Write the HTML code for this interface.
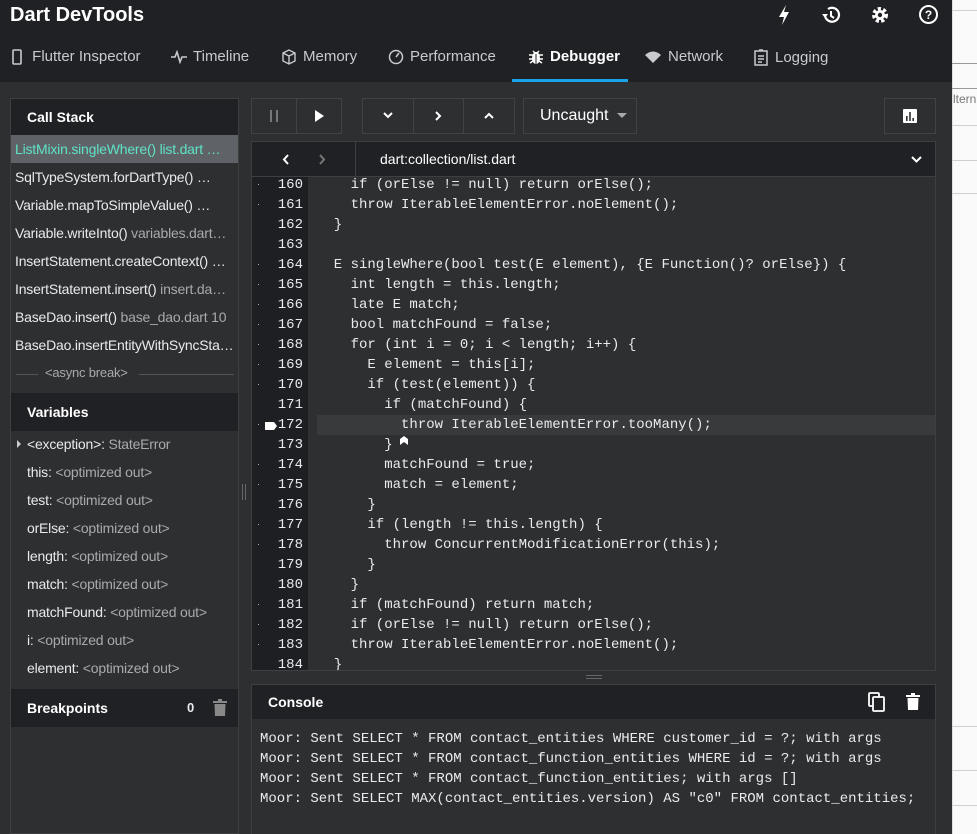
<!DOCTYPE html>
<html style="overflow:hidden;height:834px"><head><meta charset="utf-8"><style>
*{box-sizing:border-box;margin:0;padding:0}
body{width:977px;height:834px;overflow:hidden;background:#fff;font-family:"Liberation Sans",sans-serif;color:#e8eaed;position:relative}
.dark{position:absolute;left:0;top:0;width:952px;height:834px;background:#2e2f31}
.bar{position:absolute;left:0;top:0;width:952px;height:82px;background:#202124}
.abs{position:absolute}
.title{left:10px;top:4px;font-size:20px;font-weight:bold;color:#fff}
.tab{top:48px;font-size:15px;color:#c8cacd;display:flex;align-items:center;gap:6px}
.panel{border:1px solid #3e3f41;background:#2e2f31}
.hdr{background:#202124;font-size:14px;font-weight:bold;color:#fff;padding-left:16px;display:flex;align-items:center}
.row{position:absolute;left:4px;font-size:14px;color:#e8eaed;white-space:nowrap;letter-spacing:-0.2px}
.row span{color:#a8aaad}
.btn{position:absolute;border:1px solid #414245;background:#2e2f31;display:flex;align-items:center;justify-content:center;color:#fff;font-size:14px}
.mono{font-family:"Liberation Mono",monospace;font-size:14px}
.ln{position:absolute;left:0;width:56px;text-align:right;padding-right:5px;color:#e8eaed}
.cl{position:absolute;left:65px;white-space:pre;color:#e8eaed}
.dot{position:absolute;left:6px;width:1px;height:1px;background:#aaa}
.wl{position:absolute;left:952px;width:25px;height:1px;background:#d0d0d0}
</style></head><body>
<div class="dark"></div>
<div class="bar"></div>
<div class="abs title">Dart DevTools</div>
<svg class="abs" style="left:775px;top:4px" width="18" height="22" viewBox="0 0 18 22"><path d="M11 1 L4 13 H9 L7 21 L14 8 H9 Z" fill="#fff"/></svg>
<svg class="abs" style="left:820px;top:4px" width="22" height="22" viewBox="0 0 22 22"><path d="M5 11 A7 7 0 1 0 8 5" stroke="#fff" stroke-width="2.2" fill="none"/><path d="M2 10 L5 14 L8 10Z" fill="#fff"/><path d="M11 7 V12 L14 14" stroke="#fff" stroke-width="2" fill="none"/></svg>
<svg class="abs" style="left:870px;top:5px" width="20" height="20" viewBox="0 0 20 20"><circle cx="10" cy="10" r="6" fill="none" stroke="#fff" stroke-width="4" stroke-dasharray="3 2.2"/><circle cx="10" cy="10" r="5" fill="#fff"/><circle cx="10" cy="10" r="2.2" fill="#202124"/></svg>
<svg class="abs" style="left:918px;top:4px" width="21" height="21" viewBox="0 0 21 21"><circle cx="10.5" cy="10.5" r="8.5" fill="none" stroke="#fff" stroke-width="2"/><text x="10.5" y="15" text-anchor="middle" font-size="12" font-weight="bold" fill="#fff" font-family="Liberation Sans">?</text></svg>
<div class="abs tab" style="left:12px"><svg width="10" height="16"><rect x="1" y="1" width="8" height="14" rx="1" fill="none" stroke="#c8cacd" stroke-width="1.6"/></svg>&nbsp;Flutter Inspector</div>
<div class="abs tab" style="left:171px"><svg width="16" height="14"><path d="M0 7 H4 L6 2 L9 12 L11 7 H16" stroke="#c8cacd" stroke-width="1.6" fill="none"/></svg>Timeline</div>
<div class="abs tab" style="left:281px"><svg width="16" height="16"><path d="M2 4 L8 1 L14 4 V12 L8 15 L2 12Z M2 4 L8 7 L14 4 M8 7 V15" stroke="#c8cacd" stroke-width="1.4" fill="none"/></svg>Memory</div>
<div class="abs tab" style="left:388px"><svg width="16" height="16"><circle cx="8" cy="8" r="6.5" stroke="#c8cacd" stroke-width="1.5" fill="none"/><path d="M8 8 L11 4" stroke="#c8cacd" stroke-width="1.6"/></svg>Performance</div>
<div class="abs tab" style="left:528px;color:#fff;font-weight:bold"><svg width="16" height="16"><ellipse cx="8" cy="9" rx="4" ry="6" fill="#fff"/><path d="M1 6 H15 M1 10 H15 M2 14 L5 12 M14 14 L11 12 M5 2 L7 4 M11 2 L9 4" stroke="#fff" stroke-width="1.4"/><path d="M8 5 V15" stroke="#202124" stroke-width="1"/></svg>Debugger</div>
<div class="abs" style="left:512px;top:79px;width:116px;height:3px;background:#1aa3e8"></div>
<div class="abs tab" style="left:644px"><svg width="18" height="14"><path d="M1 5 Q9 -2 17 5 L9 13Z" fill="#c8cacd"/></svg>Network</div>
<div class="abs tab" style="left:753px"><svg width="16" height="18"><rect x="2" y="3" width="12" height="14" fill="none" stroke="#c8cacd" stroke-width="1.5"/><path d="M5 8 H11 M5 11 H11 M5 14 H9 M6 2 H10" stroke="#c8cacd" stroke-width="1.5"/></svg>Logging</div>

<div class="abs panel" style="left:10px;top:98px;width:229px;height:736px;overflow:hidden">
 <div class="hdr" style="height:36px">Call Stack</div>
 <div class="abs" style="left:0;top:36px;width:227px;height:28px;background:#5f6368"></div>
 <div class="row" style="top:42px;color:#5fe3c5">ListMixin.singleWhere() list.dart …</div>
 <div class="row" style="top:70px">SqlTypeSystem.forDartType() …</div>
 <div class="row" style="top:98px">Variable.mapToSimpleValue() …</div>
 <div class="row" style="top:126px">Variable.writeInto() <span>variables.dart…</span></div>
 <div class="row" style="top:154px">InsertStatement.createContext() …</div>
 <div class="row" style="top:182px">InsertStatement.insert() <span>insert.da…</span></div>
 <div class="row" style="top:210px">BaseDao.insert() <span>base_dao.dart 10</span></div>
 <div class="row" style="top:238px">BaseDao.insertEntityWithSyncSta…</div>
 <div class="abs" style="left:5px;top:275px;width:22px;height:1px;background:#555"></div>
 <div class="row" style="left:34px;top:266px;font-size:13px;color:#a8aaad">&lt;async break&gt;</div>
 <div class="abs" style="left:128px;top:275px;width:95px;height:1px;background:#555"></div>
 <div class="abs hdr" style="left:0;top:294px;width:227px;height:38px">Variables</div>
 <div class="abs" style="left:6px;top:341px;width:0;height:0;border-left:4px solid #ccc;border-top:4px solid transparent;border-bottom:4px solid transparent"></div>
 <div class="row" style="left:16px;top:337px">&lt;exception&gt;: <span>StateError</span></div>
 <div class="row" style="left:16px;top:365px">this: <span>&lt;optimized out&gt;</span></div>
 <div class="row" style="left:16px;top:393px">test: <span>&lt;optimized out&gt;</span></div>
 <div class="row" style="left:16px;top:421px">orElse: <span>&lt;optimized out&gt;</span></div>
 <div class="row" style="left:16px;top:449px">length: <span>&lt;optimized out&gt;</span></div>
 <div class="row" style="left:16px;top:477px">match: <span>&lt;optimized out&gt;</span></div>
 <div class="row" style="left:16px;top:505px">matchFound: <span>&lt;optimized out&gt;</span></div>
 <div class="row" style="left:16px;top:533px">i: <span>&lt;optimized out&gt;</span></div>
 <div class="row" style="left:16px;top:561px">element: <span>&lt;optimized out&gt;</span></div>
 <div class="abs hdr" style="left:0;top:590px;width:227px;height:38px">Breakpoints</div>
 <div class="row" style="left:176px;top:601px;font-weight:bold;font-size:13px">0</div>
 <svg class="abs" style="left:202px;top:600px" width="14" height="17"><rect x="0" y="2" width="14" height="2" fill="#888"/><rect x="5" y="0" width="4" height="2" fill="#888"/><path d="M1.5 5 H12.5 L12 17 H2Z" fill="#888"/></svg>
</div>
<div class="abs" style="left:242px;top:484px;width:1px;height:16px;background:#666"></div>
<div class="abs" style="left:245px;top:484px;width:1px;height:16px;background:#666"></div>

<div class="btn" style="left:251px;top:98px;width:46px;height:36px"><svg width="10" height="12"><rect x="1" width="2" height="12" fill="#777"/><rect x="7" width="2" height="12" fill="#777"/></svg></div>
<div class="btn" style="left:296px;top:98px;width:46px;height:36px"><svg width="10" height="12"><path d="M1 0 L10 6 L1 12Z" fill="#fff"/></svg></div>
<div class="btn" style="left:362px;top:98px;width:52px;height:36px"><svg width="10" height="8"><path d="M1 1 L5 5 L9 1" stroke="#fff" stroke-width="2" fill="none"/></svg></div>
<div class="btn" style="left:413px;top:98px;width:51px;height:36px"><svg width="8" height="10"><path d="M1 1 L5 5 L1 9" stroke="#fff" stroke-width="2" fill="none"/></svg></div>
<div class="btn" style="left:463px;top:98px;width:52px;height:36px"><svg width="10" height="8"><path d="M1 6 L5 2 L9 6" stroke="#fff" stroke-width="2" fill="none"/></svg></div>
<div class="btn" style="left:523px;top:98px;width:114px;height:36px;justify-content:flex-start;padding-left:16px;font-size:16px">Uncaught<svg style="margin-left:8px" width="10" height="6"><path d="M0 0 H10 L5 5Z" fill="#aaa"/></svg></div>
<div class="btn" style="left:884px;top:98px;width:52px;height:36px"><svg width="14" height="14"><rect width="14" height="14" rx="1" fill="#fff"/><rect x="3" y="7" width="1.6" height="5" fill="#2e2f31"/><rect x="6.2" y="3" width="1.6" height="9" fill="#2e2f31"/><rect x="9.4" y="9" width="1.6" height="3" fill="#2e2f31"/></svg></div>

<div class="abs" style="left:251px;top:141px;width:685px;height:530px;border:1px solid #3e3f41;background:#2e2f31;overflow:hidden">
 <div class="abs" style="left:0;top:0;width:685px;height:35px;background:#202124;border-bottom:1px solid #3e3f41"></div>
 <svg class="abs" style="left:30px;top:12px" width="8" height="11"><path d="M6 1 L2 5.5 L6 10" stroke="#fff" stroke-width="2" fill="none"/></svg>
 <svg class="abs" style="left:66px;top:12px" width="8" height="11"><path d="M2 1 L6 5.5 L2 10" stroke="#777" stroke-width="2" fill="none"/></svg>
 <div class="abs" style="left:103px;top:0;width:1px;height:35px;background:#3e3f41"></div>
 <div class="abs" style="left:128px;top:9px;font-size:14px;color:#fff">dart:collection/list.dart</div>
 <svg class="abs" style="left:659px;top:14px" width="11" height="8"><path d="M1 1 L5.5 5.5 L10 1" stroke="#fff" stroke-width="2" fill="none"/></svg>
 <div class="abs" style="left:0;top:35px;width:56px;height:500px;background:#1e1f22"></div>
 <div class="abs" style="left:65px;top:273px;width:620px;height:20px;background:#393a3c"></div>
 <div class="mono">
  <div class="ln" style="top:35px">160</div><div class="cl" style="top:35px">    if (orElse != null) return orElse();</div>
  <div class="ln" style="top:55px">161</div><div class="cl" style="top:55px">    throw IterableElementError.noElement();</div>
  <div class="ln" style="top:75px">162</div><div class="cl" style="top:75px">  }</div>
  <div class="ln" style="top:95px">163</div>
  <div class="ln" style="top:115px">164</div><div class="cl" style="top:115px">  E singleWhere(bool test(E element), {E Function()? orElse}) {</div>
  <div class="ln" style="top:135px">165</div><div class="cl" style="top:135px">    int length = this.length;</div>
  <div class="ln" style="top:155px">166</div><div class="cl" style="top:155px">    late E match;</div>
  <div class="ln" style="top:175px">167</div><div class="cl" style="top:175px">    bool matchFound = false;</div>
  <div class="ln" style="top:195px">168</div><div class="cl" style="top:195px">    for (int i = 0; i &lt; length; i++) {</div>
  <div class="ln" style="top:215px">169</div><div class="cl" style="top:215px">      E element = this[i];</div>
  <div class="ln" style="top:235px">170</div><div class="cl" style="top:235px">      if (test(element)) {</div>
  <div class="ln" style="top:255px">171</div><div class="cl" style="top:255px">        if (matchFound) {</div>
  <div class="ln" style="top:275px">172</div><div class="cl" style="top:275px">          throw IterableElementError.tooMany();</div>
  <div class="ln" style="top:295px">173</div><div class="cl" style="top:295px">        }</div>
  <div class="ln" style="top:315px">174</div><div class="cl" style="top:315px">        matchFound = true;</div>
  <div class="ln" style="top:335px">175</div><div class="cl" style="top:335px">        match = element;</div>
  <div class="ln" style="top:355px">176</div><div class="cl" style="top:355px">      }</div>
  <div class="ln" style="top:375px">177</div><div class="cl" style="top:375px">      if (length != this.length) {</div>
  <div class="ln" style="top:395px">178</div><div class="cl" style="top:395px">        throw ConcurrentModificationError(this);</div>
  <div class="ln" style="top:415px">179</div><div class="cl" style="top:415px">      }</div>
  <div class="ln" style="top:435px">180</div><div class="cl" style="top:435px">    }</div>
  <div class="ln" style="top:455px">181</div><div class="cl" style="top:455px">    if (matchFound) return match;</div>
  <div class="ln" style="top:475px">182</div><div class="cl" style="top:475px">    if (orElse != null) return orElse();</div>
  <div class="ln" style="top:495px">183</div><div class="cl" style="top:495px">    throw IterableElementError.noElement();</div>
  <div class="ln" style="top:515px">184</div><div class="cl" style="top:515px">  }</div>
 </div>
 <div class="dot" style="top:42px"></div><div class="dot" style="top:62px"></div><div class="dot" style="top:122px"></div><div class="dot" style="top:142px"></div><div class="dot" style="top:162px"></div><div class="dot" style="top:182px"></div><div class="dot" style="top:202px"></div><div class="dot" style="top:222px"></div><div class="dot" style="top:242px"></div><div class="dot" style="top:282px"></div><div class="dot" style="top:322px"></div><div class="dot" style="top:342px"></div><div class="dot" style="top:382px"></div><div class="dot" style="top:402px"></div><div class="dot" style="top:462px"></div><div class="dot" style="top:482px"></div><div class="dot" style="top:502px"></div>
 <svg class="abs" style="left:12px;top:279px" width="14" height="10"><path d="M1 1 H10 L13 5 L10 9 H1Z" fill="#fff"/></svg>
 <svg class="abs" style="left:148px;top:294px" width="8" height="9"><path d="M0 9 V3 L4 0 L8 3 V9 L4 6Z" fill="#fff"/></svg>
</div>
<div class="abs" style="left:586px;top:675px;width:16px;height:1px;background:#666"></div>
<div class="abs" style="left:586px;top:678px;width:16px;height:1px;background:#666"></div>

<div class="abs" style="left:251px;top:684px;width:685px;height:150px;border:1px solid #3e3f41;border-bottom:none;background:#2e2f31;overflow:hidden">
 <div class="hdr" style="height:34px;font-size:14px">Console</div>
 <svg class="abs" style="left:616px;top:7px" width="18" height="20"><rect x="1" y="1" width="10" height="13" rx="1" fill="none" stroke="#fff" stroke-width="1.8"/><rect x="5" y="5" width="11" height="14" rx="1" fill="#202124" stroke="#fff" stroke-width="1.8"/></svg>
 <svg class="abs" style="left:654px;top:8px" width="14" height="17"><rect x="0" y="2" width="14" height="2" fill="#fff"/><rect x="5" y="0" width="4" height="2" fill="#fff"/><path d="M1.5 5 H12.5 L12 17 H2Z" fill="#fff"/></svg>
 <div class="mono" style="position:absolute;left:8px;top:44px;line-height:20px;white-space:pre;color:#e8eaed">Moor: Sent SELECT * FROM contact_entities WHERE customer_id = ?; with args
Moor: Sent SELECT * FROM contact_function_entities WHERE id = ?; with args
Moor: Sent SELECT * FROM contact_function_entities; with args []
Moor: Sent SELECT MAX(contact_entities.version) AS "c0" FROM contact_entities;</div>
</div>

<div class="abs" style="left:952px;top:0;width:25px;height:834px;background:#fafafa;border-left:1px solid #e0e0e0"></div>
<div class="wl" style="top:10px"></div><div class="wl" style="top:63px;background:#999"></div><div class="wl" style="top:88px;background:#999"></div><div class="wl" style="top:125px"></div><div class="wl" style="top:160px"></div><div class="wl" style="top:193px"></div>
<div class="abs" style="left:953px;top:92px;font-size:12px;color:#777">ltern</div>
<div class="wl" style="top:726px"></div><div class="wl" style="top:770px"></div><div class="wl" style="top:805px"></div>
</body></html>
